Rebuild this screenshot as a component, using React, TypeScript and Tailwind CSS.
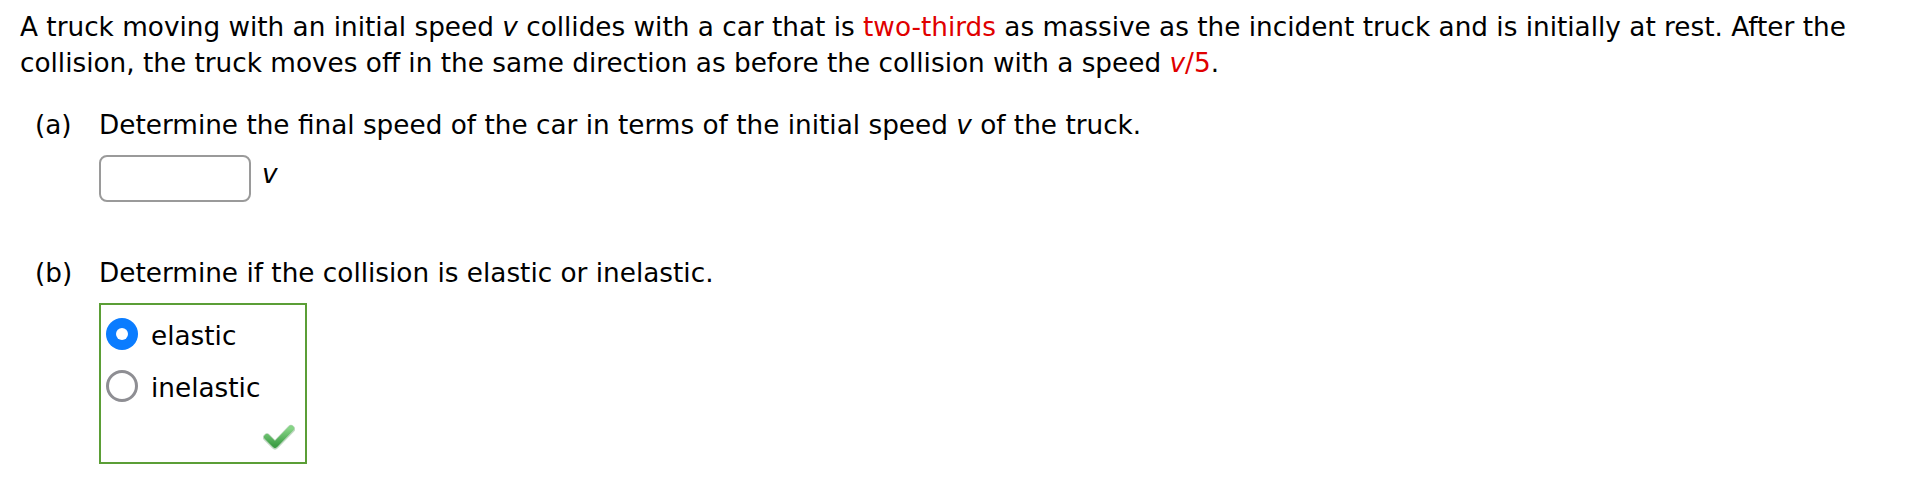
import React from 'react';

function Radio({ checked }: { checked: boolean }) {
  if (checked) {
    return (
      <span className="flex h-[32px] w-[32px] shrink-0 items-center justify-center rounded-full bg-[#0a7cff]">
        <span className="h-[12px] w-[12px] rounded-full bg-white" />
      </span>
    );
  }
  return <span className="h-[32px] w-[32px] shrink-0 rounded-full border-[3px] border-[#8e8e93] bg-white" />;
}

function CheckMark() {
  return (
    <svg width="32" height="26" viewBox="0 0 32 26" aria-hidden="true">
      <defs>
        <linearGradient id="chk" x1="0" y1="0" x2="0" y2="1">
          <stop offset="0" stopColor="#86d486" />
          <stop offset="1" stopColor="#3e9e46" />
        </linearGradient>
      </defs>
      <path
        d="M4 13.5 L12 21.5 L28 5"
        fill="none"
        stroke="#2f7a36"
        strokeOpacity="0.3"
        strokeWidth="8"
        strokeLinecap="round"
        strokeLinejoin="round"
      />
      <path
        d="M4 13 L12 21 L28 4.5"
        fill="none"
        stroke="url(#chk)"
        strokeWidth="6"
        strokeLinecap="round"
        strokeLinejoin="round"
      />
    </svg>
  );
}

export default function App() {
  const options = [
    { label: 'elastic', checked: true },
    { label: 'inelastic', checked: false },
  ];

  return (
    <div className="min-h-screen bg-white pl-[20px] pr-[20px] pt-[9px] font-['DejaVu_Sans',Verdana,sans-serif] text-[26.3px] leading-[36px] text-black">
      {/* problem statement */}
      <p className="whitespace-nowrap">
        A truck moving with an initial speed <i>v</i> collides with a car that is{' '}
        <span className="text-[#e00000]">two-thirds</span> as massive as the incident truck and is initially at
        rest. After the
        <br />
        collision, the truck moves off in the same direction as before the collision with a speed{' '}
        <span className="text-[#e00000]">
          <i>v</i>/5
        </span>
        .
      </p>

      {/* part (a) */}
      <div className="mt-[26px] flex pl-[15px]">
        <span className="w-[64px] shrink-0">(a)</span>
        <span>Determine the final speed of the car in terms of the initial speed <i>v</i> of the truck.</span>
      </div>
      <div className="mt-[12px] flex items-start pl-[79px]">
        <input
          type="text"
          className="h-[47px] w-[152px] rounded-[8px] border-2 border-[#9a9a9a] bg-white outline-none"
        />
        <i className="ml-[11px] mt-[1px]">v</i>
      </div>

      {/* part (b) */}
      <div className="mt-[53px] flex pl-[15px]">
        <span className="w-[64px] shrink-0">(b)</span>
        <span>Determine if the collision is elastic or inelastic.</span>
      </div>
      <div className="ml-[79px] mt-[12px] flex w-[208px] flex-col border-2 border-[#5b9e36] pb-[12px] pl-[5px] pr-[10px] pt-[13px]">
        <div className="flex flex-col gap-[16px]">
          {options.map((o) => (
            <label key={o.label} className="flex h-[36px] items-start">
              <Radio checked={o.checked} />
              <span className="ml-[13px]">{o.label}</span>
            </label>
          ))}
        </div>
        <div className="mt-[18px] flex justify-end">
          <CheckMark />
        </div>
      </div>
    </div>
  );
}
